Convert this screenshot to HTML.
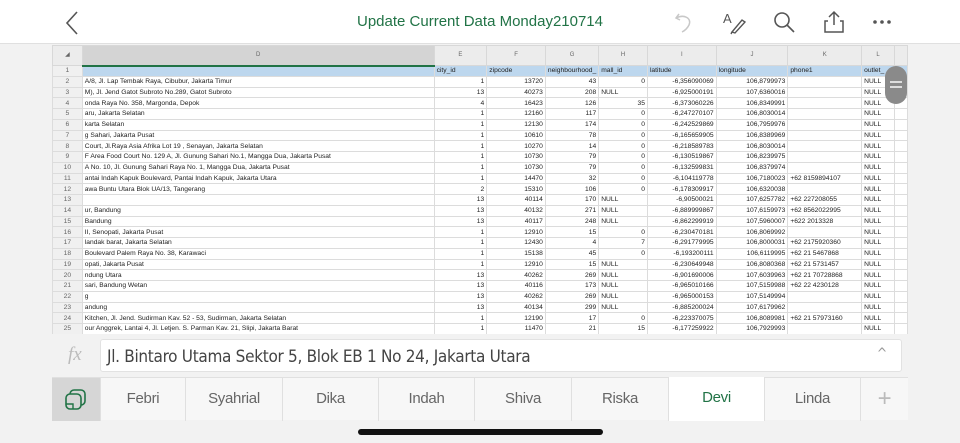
<!DOCTYPE html>
<html><head><meta charset="utf-8"><style>
*{margin:0;padding:0;box-sizing:border-box}
body{width:960px;height:443px;background:#f2f2f2;position:relative;overflow:hidden;font-family:"Liberation Sans",sans-serif}
.top{position:absolute;left:0;top:0;width:960px;height:44px;background:#fff;border-bottom:1px solid #e0e0e0}
.title{position:absolute;left:0;width:960px;top:13px;text-align:center;color:#217346;font-size:15px}
.grid{position:absolute;left:52px;top:45px;width:856px;height:289px;background:#fff;overflow:hidden}
table{border-collapse:collapse;table-layout:fixed;font-size:6.7px;color:#222}
td{border:1px solid #dcdcdc;height:10.75px;line-height:9px;padding:0 2px;white-space:nowrap;overflow:hidden}
tr.h td{height:20px;background:#ececec;color:#666;text-align:center;font-size:6px;border-color:#d8d8d8}
tr.h td.sel{background:#d4d4d4;border-bottom:2px solid #217346}
td.n{background:#f0f0f0;color:#666;text-align:center}
tr.b td{background:#bdd7ee}
tr.b td.n{background:#f0f0f0}
.r{text-align:right}
.fx{position:absolute;left:52px;top:334px;width:856px;height:43px;background:#f2f2f2}
.fbox{position:absolute;left:100px;top:339px;width:802px;height:33px;background:#fff;border:1px solid #e2e2e2;border-radius:3px;font-size:17px;color:#444;padding:7px 0 0 6px;font-family:"DejaVu Sans Condensed","Liberation Sans",sans-serif;letter-spacing:-0.3px}
.tabs{position:absolute;left:52px;top:377px;width:856px;height:43px;background:#f7f7f7;border-top:1px solid #e0e0e0}
.tab{position:absolute;top:0;height:43px;text-align:center;line-height:42px;font-size:15px;color:#666;font-weight:normal;border-left:1px solid #e0e0e0;letter-spacing:-0.3px}
</style></head><body>
<div class="top">
<svg style="position:absolute;left:64px;top:10px" width="16" height="26"><path d="M13 2 L3 13 L13 24" fill="none" stroke="#555" stroke-width="1.6"/></svg>
<div class="title">Update Current Data Monday210714</div>
<svg style="position:absolute;left:672px;top:10px" width="24" height="24"><path d="M7 4 L4 8 L8 10 M4 8 C12 4 20 8 17 15 C15 19 12 21 10 22" fill="none" stroke="#c8c8c8" stroke-width="1.5"/></svg>
<svg style="position:absolute;left:722px;top:10px" width="26" height="26"><text x="1" y="13" font-size="13" fill="#555" font-family="Liberation Sans">A</text><path d="M10 22 L20 10 L23 12 L13 23 Z M10 22 L9 24" fill="none" stroke="#555" stroke-width="1.4"/></svg>
<svg style="position:absolute;left:772px;top:10px" width="24" height="24"><circle cx="10" cy="10" r="7" fill="none" stroke="#555" stroke-width="1.6"/><path d="M15 15 L22 22" stroke="#555" stroke-width="1.6"/></svg>
<svg style="position:absolute;left:822px;top:9px" width="24" height="26"><path d="M12 3 V16 M7 8 L12 3 L17 8 M6 12 H3 V23 H21 V12 H18" fill="none" stroke="#555" stroke-width="1.5"/></svg>
<svg style="position:absolute;left:872px;top:19px" width="20" height="6"><circle cx="3" cy="3" r="1.8" fill="#555"/><circle cx="10" cy="3" r="1.8" fill="#555"/><circle cx="17" cy="3" r="1.8" fill="#555"/></svg>
</div>
<div class="grid"><table>
<colgroup><col style="width:30px"><col style="width:353px"><col style="width:53px"><col style="width:59px"><col style="width:51px"><col style="width:49px"><col style="width:69px"><col style="width:72px"><col style="width:74px"><col style="width:33px"><col style="width:13px"></colgroup>
<tr class="h"><td>◢</td><td class="sel">D</td><td>E</td><td>F</td><td>G</td><td>H</td><td>I</td><td>J</td><td>K</td><td>L</td><td></td></tr>
<tr class="b"><td class="n">1</td><td></td><td>city_id</td><td>zipcode</td><td>neighbourhood_</td><td>mall_id</td><td>latitude</td><td>longitude</td><td>phone1</td><td>outlet_</td><td></td></tr>
<tr><td class="n">2</td><td>A/8, Jl. Lap Tembak Raya, Cibubur, Jakarta Timur</td><td class="r">1</td><td class="r">13720</td><td class="r">43</td><td class="r">0</td><td class="r">-6,356090069</td><td class="r">106,8799973</td><td></td><td>NULL</td><td></td></tr>
<tr><td class="n">3</td><td>M), Jl. Jend Gatot Subroto No.289, Gatot Subroto</td><td class="r">13</td><td class="r">40273</td><td class="r">208</td><td>NULL</td><td class="r">-6,925000191</td><td class="r">107,6360016</td><td></td><td>NULL</td><td></td></tr>
<tr><td class="n">4</td><td>onda Raya No. 358, Margonda, Depok</td><td class="r">4</td><td class="r">16423</td><td class="r">126</td><td class="r">35</td><td class="r">-6,373060226</td><td class="r">106,8349991</td><td></td><td>NULL</td><td></td></tr>
<tr><td class="n">5</td><td>aru, Jakarta Selatan</td><td class="r">1</td><td class="r">12160</td><td class="r">117</td><td class="r">0</td><td class="r">-6,247270107</td><td class="r">106,8030014</td><td></td><td>NULL</td><td></td></tr>
<tr><td class="n">6</td><td>karta Selatan</td><td class="r">1</td><td class="r">12130</td><td class="r">174</td><td class="r">0</td><td class="r">-6,242529869</td><td class="r">106,7959976</td><td></td><td>NULL</td><td></td></tr>
<tr><td class="n">7</td><td>g Sahari, Jakarta Pusat</td><td class="r">1</td><td class="r">10610</td><td class="r">78</td><td class="r">0</td><td class="r">-6,165659905</td><td class="r">106,8389969</td><td></td><td>NULL</td><td></td></tr>
<tr><td class="n">8</td><td>Court, Jl.Raya Asia Afrika Lot 19 , Senayan, Jakarta Selatan</td><td class="r">1</td><td class="r">10270</td><td class="r">14</td><td class="r">0</td><td class="r">-6,218589783</td><td class="r">106,8030014</td><td></td><td>NULL</td><td></td></tr>
<tr><td class="n">9</td><td>F Area Food Court No. 129 A, Jl. Gunung Sahari No.1, Mangga Dua, Jakarta Pusat</td><td class="r">1</td><td class="r">10730</td><td class="r">79</td><td class="r">0</td><td class="r">-6,130519867</td><td class="r">106,8239975</td><td></td><td>NULL</td><td></td></tr>
<tr><td class="n">10</td><td>A No. 10, Jl. Gunung Sahari Raya No. 1, Mangga Dua, Jakarta Pusat</td><td class="r">1</td><td class="r">10730</td><td class="r">79</td><td class="r">0</td><td class="r">-6,132599831</td><td class="r">106,8379974</td><td></td><td>NULL</td><td></td></tr>
<tr><td class="n">11</td><td>antai Indah Kapuk Boulevard, Pantai Indah Kapuk, Jakarta Utara</td><td class="r">1</td><td class="r">14470</td><td class="r">32</td><td class="r">0</td><td class="r">-6,104119778</td><td class="r">106,7180023</td><td>+62 8159894107</td><td>NULL</td><td></td></tr>
<tr><td class="n">12</td><td>awa Buntu Utara Blok UA/13, Tangerang</td><td class="r">2</td><td class="r">15310</td><td class="r">106</td><td class="r">0</td><td class="r">-6,178309917</td><td class="r">106,6320038</td><td></td><td>NULL</td><td></td></tr>
<tr><td class="n">13</td><td></td><td class="r">13</td><td class="r">40114</td><td class="r">170</td><td>NULL</td><td class="r">-6,90500021</td><td class="r">107,6257782</td><td>+62 227208055</td><td>NULL</td><td></td></tr>
<tr><td class="n">14</td><td>ur, Bandung</td><td class="r">13</td><td class="r">40132</td><td class="r">271</td><td>NULL</td><td class="r">-6,889999867</td><td class="r">107,6159973</td><td>+62 8562022995</td><td>NULL</td><td></td></tr>
<tr><td class="n">15</td><td>Bandung</td><td class="r">13</td><td class="r">40117</td><td class="r">248</td><td>NULL</td><td class="r">-6,862299919</td><td class="r">107,5960007</td><td>+622 2013328</td><td>NULL</td><td></td></tr>
<tr><td class="n">16</td><td>II, Senopati, Jakarta Pusat</td><td class="r">1</td><td class="r">12910</td><td class="r">15</td><td class="r">0</td><td class="r">-6,230470181</td><td class="r">106,8069992</td><td></td><td>NULL</td><td></td></tr>
<tr><td class="n">17</td><td>landak barat, Jakarta Selatan</td><td class="r">1</td><td class="r">12430</td><td class="r">4</td><td class="r">7</td><td class="r">-6,291779995</td><td class="r">106,8000031</td><td>+62 2175920360</td><td>NULL</td><td></td></tr>
<tr><td class="n">18</td><td>Boulevard Palem Raya No. 38, Karawaci</td><td class="r">1</td><td class="r">15138</td><td class="r">45</td><td class="r">0</td><td class="r">-6,193200111</td><td class="r">106,6119995</td><td>+62 21 5467868</td><td>NULL</td><td></td></tr>
<tr><td class="n">19</td><td>opati, Jakarta Pusat</td><td class="r">1</td><td class="r">12910</td><td class="r">15</td><td>NULL</td><td class="r">-6,230649948</td><td class="r">106,8080368</td><td>+62 21 5731457</td><td>NULL</td><td></td></tr>
<tr><td class="n">20</td><td>ndung Utara</td><td class="r">13</td><td class="r">40262</td><td class="r">269</td><td>NULL</td><td class="r">-6,901690006</td><td class="r">107,6039963</td><td>+62 21 70728868</td><td>NULL</td><td></td></tr>
<tr><td class="n">21</td><td>sari, Bandung Wetan</td><td class="r">13</td><td class="r">40116</td><td class="r">173</td><td>NULL</td><td class="r">-6,965010166</td><td class="r">107,5159988</td><td>+62 22 4230128</td><td>NULL</td><td></td></tr>
<tr><td class="n">22</td><td>g</td><td class="r">13</td><td class="r">40262</td><td class="r">269</td><td>NULL</td><td class="r">-6,965000153</td><td class="r">107,5149994</td><td></td><td>NULL</td><td></td></tr>
<tr><td class="n">23</td><td>andung</td><td class="r">13</td><td class="r">40134</td><td class="r">299</td><td>NULL</td><td class="r">-6,885200024</td><td class="r">107,6179962</td><td></td><td>NULL</td><td></td></tr>
<tr><td class="n">24</td><td>Kitchen, Jl. Jend. Sudirman Kav. 52 - 53, Sudirman, Jakarta Selatan</td><td class="r">1</td><td class="r">12190</td><td class="r">17</td><td class="r">0</td><td class="r">-6,223370075</td><td class="r">106,8089981</td><td>+62 21 57973160</td><td>NULL</td><td></td></tr>
<tr><td class="n">25</td><td>our Anggrek, Lantai 4, Jl. Letjen. S. Parman Kav. 21, Slipi, Jakarta Barat</td><td class="r">1</td><td class="r">11470</td><td class="r">21</td><td class="r">15</td><td class="r">-6,177259922</td><td class="r">106,7929993</td><td></td><td>NULL</td><td></td></tr>
</table></div>
<div style="position:absolute;left:885px;top:66px;width:22px;height:38px;border-radius:11px;background:#8a8a8a"><div style="position:absolute;left:5px;top:15px;width:12px;height:2px;background:#ddd"></div><div style="position:absolute;left:5px;top:20px;width:12px;height:2px;background:#ddd"></div></div>
<div class="fx"><div style="position:absolute;left:16px;top:10px;font-family:'Liberation Serif',serif;font-style:italic;font-size:19px;color:#bbb">fx</div></div>
<div class="fbox">Jl. Bintaro Utama Sektor 5, Blok EB 1 No 24, Jakarta Utara<span style="position:absolute;right:14px;top:6px;color:#999;font-size:14px">^</span></div>
<div class="tabs">
<div style="position:absolute;left:0;top:0;width:48px;height:43px;background:#d6d6d6"><svg style="position:absolute;left:13px;top:11px" width="22" height="22"><rect x="5" y="1" width="15" height="15" rx="4" fill="none" stroke="#217346" stroke-width="1.6"/><rect x="1" y="5" width="15" height="15" rx="4" fill="#d6d6d6" stroke="#217346" stroke-width="1.6"/><path d="M1 15 H8 V20" fill="none" stroke="#217346" stroke-width="1.4"/></svg></div>
<div class="tab" style="left:48px;width:85px">Febri</div>
<div class="tab" style="left:133px;width:97px">Syahrial</div>
<div class="tab" style="left:230px;width:96px">Dika</div>
<div class="tab" style="left:326px;width:96px">Indah</div>
<div class="tab" style="left:422px;width:97px">Shiva</div>
<div class="tab" style="left:519px;width:97px">Riska</div>
<div class="tab" style="left:616px;width:96px;background:#fff;color:#217346;top:-1px;height:44px">Devi</div>
<div class="tab" style="left:712px;width:96px">Linda</div>
<div class="tab" style="left:808px;width:48px;color:#bbb;font-size:24px">+</div>
</div>
<div style="position:absolute;left:358px;top:429px;width:245px;height:6px;border-radius:3px;background:#111"></div>
</body></html>
